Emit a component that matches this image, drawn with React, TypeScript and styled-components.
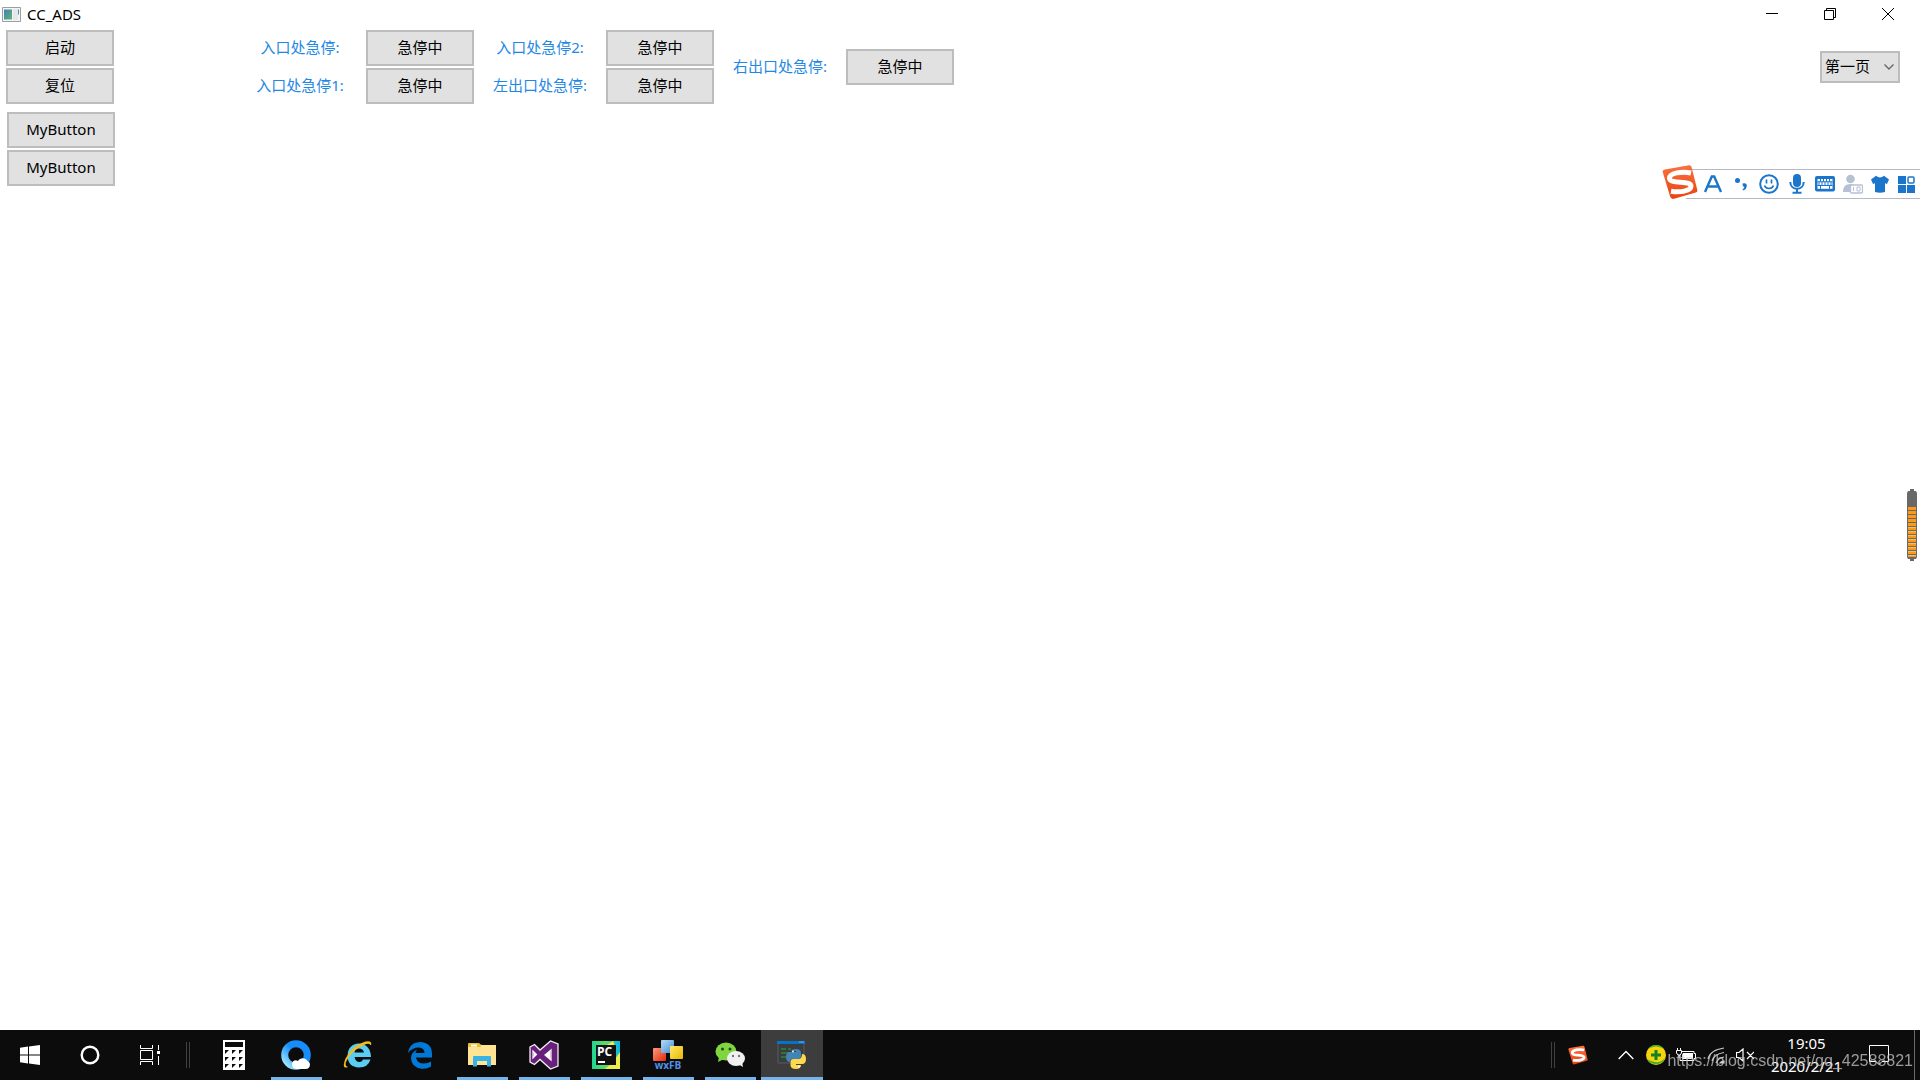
import React from 'react';
import styled, { createGlobalStyle } from 'styled-components';

const GlobalStyle = createGlobalStyle`
  * { box-sizing: border-box; }
  body { margin: 0; background: #fff; }
  button, select { font: inherit; margin: 0; }
`;

const ui = '"Noto Sans", "Noto Sans CJK SC", sans-serif';

const Desktop = styled.div`
  min-height: 100vh;
  display: flex;
  flex-direction: column;
  background: #fff;
  font-family: ${ui};
  font-size: 15px;
  color: #000;
`;

const TitleBar = styled.header`
  display: flex;
  align-items: center;
  height: 28px;
  padding: 0 3px 0 2px;
  gap: 6px;
`;

const Title = styled.h1`
  margin: 0;
  flex: 1;
  font-size: 15px;
  font-weight: 400;
  line-height: 28px;
`;

const CaptionButtons = styled.div`
  display: flex;
`;

const CaptionButton = styled.button`
  width: 58px;
  height: 28px;
  padding: 0;
  border: 0;
  background: transparent;
  display: flex;
  align-items: center;
  justify-content: center;
`;

const Client = styled.main`
  flex: 1;
  display: flex;
  flex-direction: column;
`;

const Toolbar = styled.section`
  display: flex;
  align-items: center;
  height: 78px;
  padding-right: 20px;
`;

const Cells = styled.div`
  display: flex;
  align-items: center;
`;

const Column = styled.div<{ $gapBefore?: boolean }>`
  display: flex;
  flex-direction: column;
  width: 120px;
  align-items: center;
  margin-left: ${(p) => (p.$gapBefore ? 120 : 0)}px;
`;

const Cell = styled.div`
  display: flex;
  align-items: center;
  justify-content: center;
  height: 38px;
`;

const StopLabel = styled.label`
  padding-bottom: 3px;
  color: #1e88e5;
  line-height: 20px;
  white-space: nowrap;
`;

const PushButton = styled.button`
  width: 108px;
  height: 36px;
  padding: 0 0 2px;
  border: 2px solid #bdbdbd;
  background: #e1e1e1;
  color: #000;
  line-height: 20px;
`;

const PageSelectBox = styled.div`
  display: grid;
  margin-left: auto;
  align-items: center;
  & > * { grid-area: 1 / 1; }
  & > svg { justify-self: end; margin-right: 6px; pointer-events: none; }
`;

const PageSelect = styled.select`
  appearance: none;
  width: 80px;
  height: 32px;
  padding: 0 3px 2px;
  border: 2px solid #bdbdbd;
  border-radius: 0;
  background: #e1e1e1;
  color: #000;
`;

const ExtraButtons = styled.section`
  display: flex;
  flex-direction: column;
  padding: 6px 7px;
  gap: 2px;
`;

const ImeBar = styled.aside`
  position: fixed;
  top: 164px;
  right: 0;
  display: flex;
  align-items: center;
  height: 36px;
`;

const ImeLogo = styled.div`
  z-index: 1;
  height: 36px;
  margin-right: -12px;
`;

const ImeTools = styled.div`
  display: flex;
  align-items: center;
  height: 30px;
  margin-top: 4px;
  padding: 0 1px 0 13px;
  border: 1px solid #b5b9c4;
  border-width: 1px 0;
  background: #fff;
`;

const ImeButton = styled.button<{ $narrow?: boolean }>`
  width: ${(p) => (p.$narrow ? 26 : 28)}px;
  height: 28px;
  padding: 0;
  border: 0;
  background: transparent;
  display: flex;
  align-items: center;
  justify-content: center;
`;

const BatteryGauge = styled.aside`
  position: fixed;
  top: 489px;
  right: 3px;
  height: 72px;
`;

const Taskbar = styled.footer`
  display: flex;
  align-items: center;
  height: 50px;
  background: #0c0c0c;
  color: #fff;
`;

const SystemButton = styled.button`
  width: 60px;
  height: 50px;
  padding: 0;
  border: 0;
  background: transparent;
  display: flex;
  align-items: center;
  justify-content: center;
`;

const Divider = styled.div`
  width: 4px;
  height: 26px;
  border: 1px solid #404040;
  border-width: 0 1px;
`;

const SystemDivider = styled(Divider)`
  margin-left: 6px;
`;

const Apps = styled.nav`
  display: flex;
  padding-left: 13px;
  flex: 1;
`;

const AppButton = styled.button<{ $running?: boolean; $active?: boolean }>`
  position: relative;
  width: 62px;
  height: 50px;
  padding: 0;
  border: 0;
  background: ${(p) => (p.$active ? '#3d3d3d' : 'transparent')};
  display: flex;
  align-items: center;
  justify-content: center;
  &::after {
    content: '';
    display: ${(p) => (p.$running ? 'block' : 'none')};
    position: absolute;
    bottom: 0;
    left: ${(p) => (p.$active ? 0 : 6)}px;
    right: ${(p) => (p.$active ? 0 : 5)}px;
    height: 3px;
    background: #76b4ee;
  }
`;

const Tray = styled.div`
  display: flex;
  align-items: center;
  height: 50px;
`;

const TrayButton = styled.button<{ $width: number; $after?: number }>`
  width: ${(p) => p.$width}px;
  height: 50px;
  margin-right: ${(p) => p.$after ?? 0}px;
  padding: 0;
  border: 0;
  background: transparent;
  display: flex;
  align-items: center;
  justify-content: center;
`;

const Clock = styled.time`
  width: 95px;
  font-size: 15px;
  line-height: 23px;
  text-align: center;
`;

const ShowDesktop = styled.button`
  width: 6px;
  height: 50px;
  padding: 0;
  border: 0;
  border-left: 1px solid #6a6a6a;
  background: transparent;
`;

const Watermark = styled.div`
  position: fixed;
  right: 7px;
  bottom: 8px;
  font-family: "Liberation Sans", Arial, sans-serif;
  font-size: 16px;
  line-height: 22px;
  color: rgba(200, 200, 200, 0.75);
  pointer-events: none;
`;

const blue = '#1b75cb';

function SogouLogo({ size }: { size: number }) {
  return (
    <svg width={size} height={size} viewBox="0 0 36 36" display="block">
      <defs>
        <linearGradient id="sogou" x1="0" y1="0" x2="0" y2="1">
          <stop offset="0" stopColor="#f9713f" />
          <stop offset="1" stopColor="#ea4310" />
        </linearGradient>
      </defs>
      <path d="M3 5.500 27 1.200q2-.3 2.500 1.500L35.300 26q.4 2-1.500 2.500L12 34.800q-3 .6-3.800-2L.7 8q-.4-2 2.300-2.500z" fill="url(#sogou)" />
      <path d="M29 9C20 7 7.500 9 7.500 14.200c0 6.300 21.500 1.600 21.500 7.800 0 5-11 6.800-20 5.200" fill="none" stroke="#fff" strokeWidth="5" />
    </svg>
  );
}

const imeIcons: { name: string; narrow?: boolean; art: React.ReactNode }[] = [
  { name: 'English', art: <svg width="18" height="18"><path d="M1 17 7.800 1.500h2.400L17 17M4 11.500h10" fill="none" stroke={blue} strokeWidth="2.400" /></svg> },
  { name: 'Punctuation', art: <svg width="14" height="16"><circle cx="3.500" cy="4.500" r="2.500" fill={blue} /><path d="M8.500 7.500q4.500-1 4.300 2.500-.5 3.500-3.500 4.500l-.8-1.200q2-.8 1.800-2.300-2-.5-1.800-3.500" fill={blue} /></svg> },
  { name: 'Emoji', art: <svg width="20" height="20" fill="none" stroke={blue} strokeWidth="2"><circle cx="10" cy="10" r="8.800" /><path d="M7.500 5.500v4M12.500 5.500v4M5.500 11.500c1.500 4 7.500 4 9 0" strokeWidth="1.700" /></svg> },
  { name: 'Voice', art: <svg width="16" height="20"><rect x="4" y="0" width="8" height="13" rx="4" fill={blue} /><path d="M1.300 8c0 9 13.400 9 13.400 0M8 14v4.500M3.500 18.800h9" fill="none" stroke={blue} strokeWidth="2" /></svg> },
  { name: 'Keyboard', art: <svg width="20" height="16"><rect width="20" height="15.500" rx="2" fill={blue} /><path d="M2.500 3h15v9.800h-15z" fill="#fff" /><path d="M2.500 5.800h15M2.500 9.500h15M5.500 3v2.800M8.500 3v2.800M11.500 3v2.800M14.500 3v2.800M4 5.800v3.700M7 5.800v3.700M10 5.800v3.700M13 5.800v3.700M16 5.800v3.700M5.500 9.500v3.300M14.500 9.500v3.300" stroke={blue} /></svg> },
  { name: 'Account', art: <svg width="20" height="20"><circle cx="7.500" cy="5" r="4.300" fill="#b6c1d5" /><path d="M0 18q0-8 7-8 4 0 5 2v6z" fill="#b6c1d5" /><rect x="7.500" y="11" width="12" height="8" rx="1" fill="#fff" stroke="#b6c1d5" strokeWidth="1.300" /><path d="M10.500 13v4M14 13h3v4h-3z" fill="none" stroke="#b6c1d5" /></svg> },
  { name: 'Skin', narrow: true, art: <svg width="18" height="18"><path d="M5 .8Q9 4 13 .8L18 4.500 16 9l-2-.8V17q-5 1.500-10 0V8.200L2 9 0 4.500z" fill={blue} /></svg> },
  { name: 'Toolbox', narrow: true, art: <svg width="17" height="17" fill={blue}><path d="M0 0h8v8H0zM0 9h8v8H0zM9 9h8v8H9z" /><rect x="10" y="1" width="6" height="6" rx="1" fill="#fff" stroke={blue} strokeWidth="1.500" /></svg> },
];

const apps: { name: string; running?: boolean; active?: boolean; art: React.ReactNode }[] = [
  {
    name: 'Calculator',
    art: (
      <svg width="22" height="30">
        <path d="M0 0h22v30H0z" fill="#fff" />
        <path d="M2 2h18v5H2zM2 10h4L2 14zM9 10h4l-4 4zM16 10h4l-4 4zM2 17h4l-4 4zM9 17h4l-4 4zM16 17h4l-4 4zM2 24h4l-4 4zM9 24h4l-4 4zM16 24h4l-4 4z" fill="#0c0c0c" />
      </svg>
    ),
  },
  {
    name: 'QQ Browser',
    running: true,
    art: (
      <svg width="30" height="30">
        <defs><linearGradient id="qq" x1="1" y1="0" x2="0" y2="1"><stop offset=".45" stopColor="#168dfb" /><stop offset="1" stopColor="#a8edff" /></linearGradient></defs>
        <circle cx="15" cy="15" r="11.300" fill="none" stroke="url(#qq)" strokeWidth="7" />
        <path d="M15 29a4.500 4.500 0 0 1-1-8.700q2 0 3 .7a5.500 5.500 0 0 1 9.500 0A4.200 4.200 0 0 1 25 29z" fill="#fff" />
      </svg>
    ),
  },
  {
    name: 'Internet Explorer',
    art: (
      <svg width="30" height="30">
        <path d="M27.500 19.500Q25 27.500 16 27.500 5 27 4.500 16 5 4 16 3.500 27.500 4.500 28 17H11.500q1 5 5 5 2.500 0 3.500-2.500zM11.500 12.500H21q-1-4-5-4t-4.500 4z" fill="#5bcdf5" />
        <path d="M5 27Q-2 30 2.500 18.500 10 5 22.500 1.500q7-1.500 5.500 4-1.500-3-7-.5Q8 10.500 3 22q-1.500 4.500 2 5z" fill="#f4bd18" />
      </svg>
    ),
  },
  {
    name: 'Edge',
    art: (
      <svg width="26" height="28">
        <path d="M1 12Q2.500 1 14 1q11 1 11 12v3.500H9q1 6 8 6 4 0 7-2v5q-4 2.500-9 2.200Q4 26.500 4 17q0-5.500 6-8.500-1.500 2-1.500 3.500h9q0-5-5.500-5.500Q5 6.500 1 12z" fill="#0078d7" />
      </svg>
    ),
  },
  {
    name: 'File Explorer',
    running: true,
    art: (
      <svg width="28" height="24">
        <path d="M0 1h11l3 1H28v20H0z" fill="#ffe493" /><path d="M0 1q0-1 1-1h10q1 0 2 4H0z" fill="#f2bd2d" /><path d="M3 1.500h6v2H3z" fill="#fff" />
        <path d="M5 23.500V14q0-1 1-1h16q1 0 1 1v9.500h-4V18H9v5.500z" fill="#39b2e5" />
      </svg>
    ),
  },
  {
    name: 'Visual Studio',
    running: true,
    art: (
      <svg width="30" height="30">
        <path d="M1 7 5.500 4.500 11 10 21.500 1 29 4v22l-7.500 3L11 19.500 5.500 24.500 1 22zM4 11v7l3.500-3.500zM22 10l-6 5 6 5z" fill="#68217a" fillRule="evenodd" stroke="#f3edf5" strokeWidth="1.300" />
        <path d="m4.500 11.500 3 3-3 3zM21.500 10.500v9L16 15z" fill="#fff" />
      </svg>
    ),
  },
  {
    name: 'PyCharm',
    running: true,
    art: (
      <svg width="28" height="28">
        <defs><linearGradient id="pc"><stop stopColor="#1ed791" /><stop offset=".5" stopColor="#61da62" /><stop offset="1" stopColor="#05b6ed" /></linearGradient></defs>
        <path d="M0 0h28v28H0z" fill="url(#pc)" /><path d="m13 28 7-6 8-11v17zM15 4l6-4 2 5z" fill="#ecf04c" />
        <path d="M4 4h20v20H4z" fill="#111" />
        <text x="5" y="15" fill="#fff" fontFamily="Open Sans, sans-serif" fontWeight="700" fontSize="12">PC</text>
        <path d="M6 20h7v2H6z" fill="#fff" />
      </svg>
    ),
  },
  {
    name: 'wxFormBuilder',
    running: true,
    art: (
      <svg width="32" height="34" viewBox="0 -2 32 34">
        <defs>
          <linearGradient id="wr" x2="1" y2="1"><stop stopColor="#ff9a7e" /><stop offset="1" stopColor="#e02a08" /></linearGradient>
          <linearGradient id="wb" x2="1" y2="1"><stop stopColor="#b5dcfa" /><stop offset="1" stopColor="#478bd0" /></linearGradient>
          <linearGradient id="wy" x2="1" y2="1"><stop stopColor="#ffe96a" /><stop offset="1" stopColor="#e9b800" /></linearGradient>
        </defs>
        <rect x="1" y="8" width="13" height="13" rx="1" fill="url(#wr)" /><rect x="9" y="0" width="13" height="13" rx="1" fill="url(#wb)" /><rect x="18" y="6" width="13" height="13" rx="1" fill="url(#wy)" />
        <text x="16" y="29" textAnchor="middle" fill="#5591ea" fontFamily="Open Sans, sans-serif" fontWeight="700" fontSize="10">wxFB</text>
      </svg>
    ),
  },
  {
    name: 'WeChat',
    running: true,
    art: (
      <svg width="30" height="26">
        <ellipse cx="11" cy="9.500" rx="10.500" ry="9" fill="#80d640" /><path d="m4 15-1 5 6-3z" fill="#80d640" />
        <ellipse cx="21" cy="16.500" rx="9" ry="7.500" fill="#f1f1f3" /><path d="m23 22 5 3-1-5z" fill="#f1f1f3" />
        <g fill="#264918"><circle cx="7.500" cy="7" r="1.500" /><circle cx="15" cy="7" r="1.500" /><circle cx="18" cy="14" r="1.200" fill="#777" /><circle cx="24" cy="14" r="1.200" fill="#777" /></g>
      </svg>
    ),
  },
  {
    name: 'Python',
    running: true,
    active: true,
    art: (
      <svg width="30" height="30">
        <path d="M1 2h26v21H1z" fill="#393d40" stroke="#555c60" /><path d="M0 1h28v3H0z" fill="#0872c6" /><path d="M22 2h5" stroke="#64b4e8" />
        <path d="M4 9h5M4 13h8M4 17h6M11 9h3" stroke="#2f8738" strokeWidth="1.300" />
        <path d="M14 11q1-2 5-2 5 0 5 4v3q0 3-3 3h-5q-3 0-3 3-4 0-4-5t4-5h6v-1z" fill="#4384b7" />
        <path d="M25 14q4 0 4 5t-4 5h-6v1h5q0 4-5 4-5.500 0-5.500-4v-3q0-3 3-3h5q3.500 0 3.500-5z" fill="#ffd94d" />
        <circle cx="16" cy="11.500" r=".9" fill="#fff" /><circle cx="22" cy="26.500" r=".9" fill="#fff" />
      </svg>
    ),
  },
];

const stops = [
  [{ id: 'in', label: '入口处急停:' }, { id: 'in1', label: '入口处急停1:' }],
  [{ id: 'in2', label: '入口处急停2:' }, { id: 'left', label: '左出口处急停:' }],
  [{ id: 'right', label: '右出口处急停:' }],
];

export default function App() {
  return (
    <Desktop>
      <GlobalStyle />
      <TitleBar>
        <svg width="19" height="15">
          <defs><linearGradient id="win" x2="1" y2="1"><stop stopColor="#477fae" /><stop offset="1" stopColor="#5cb57f" /></linearGradient></defs>
          <path d="M.5.5h18v14H.5z" fill="#f4f4f4" stroke="#9a9fa5" /><path d="M2 2.500h8v10H2z" fill="url(#win)" /><path d="M11 2h5v11h-5z" fill="#e6e7e8" /><path d="M16 2.500h1v5h-1z" fill="#4c92a0" />
        </svg>
        <Title>CC_ADS</Title>
        <CaptionButtons>
          <CaptionButton aria-label="Minimize"><svg width="12" height="12"><path d="M0 5.500h12" stroke="#000" /></svg></CaptionButton>
          <CaptionButton aria-label="Restore"><svg width="12" height="12" fill="none" stroke="#000"><path d="M.5 2.500h9v9h-9zM2.500 2.500v-2h9v9h-2" /></svg></CaptionButton>
          <CaptionButton aria-label="Close"><svg width="12" height="12"><path d="m0 0 12 12M12 0 0 12" stroke="#000" /></svg></CaptionButton>
        </CaptionButtons>
      </TitleBar>
      <Client>
        <Toolbar>
          <Cells>
            <Column>
              <Cell><PushButton>启动</PushButton></Cell>
              <Cell><PushButton>复位</PushButton></Cell>
            </Column>
            {stops.map((group, i) => (
              <React.Fragment key={i}>
                <Column $gapBefore={i === 0}>
                  {group.map((s) => <Cell key={s.id}><StopLabel htmlFor={s.id}>{s.label}</StopLabel></Cell>)}
                </Column>
                <Column>
                  {group.map((s) => <Cell key={s.id}><PushButton id={s.id}>急停中</PushButton></Cell>)}
                </Column>
              </React.Fragment>
            ))}
          </Cells>
          <PageSelectBox>
            <PageSelect aria-label="页"><option>第一页</option></PageSelect>
            <svg width="10" height="6"><path d="m.5.500 4.500 4.500L9.500.5" fill="none" stroke="#666" strokeWidth="1.400" /></svg>
          </PageSelectBox>
        </Toolbar>
        <ExtraButtons>
          <PushButton>MyButton</PushButton>
          <PushButton>MyButton</PushButton>
        </ExtraButtons>
      </Client>
      <ImeBar>
        <ImeLogo><SogouLogo size={36} /></ImeLogo>
        <ImeTools>
          {imeIcons.map((i) => <ImeButton key={i.name} aria-label={i.name} $narrow={i.narrow}>{i.art}</ImeButton>)}
        </ImeTools>
      </ImeBar>
      <BatteryGauge>
        <svg width="10" height="72">
          <path d="M3 0h4v2h2l1 2v64l-1 2H7v2H3v-2H1l-1-2V4l1-2h2z" fill="#696969" />
          <path d="M5 18v50" stroke="#fb9a18" strokeWidth="8" strokeDasharray="3 1" />
          <path d="M5 38v30" stroke="#ffbd55" strokeWidth="8" strokeDasharray="1 3" />
        </svg>
      </BatteryGauge>
      <Taskbar>
        <SystemButton aria-label="Start"><svg width="20" height="20" fill="#fff"><path d="M0 2.700 8 1.500V9.500H0zM9 1.400 20 0v9.500H9zM0 10.500h8v8L0 17.300zM9 10.500h11V20L9 18.600z" /></svg></SystemButton>
        <SystemButton aria-label="Cortana"><svg width="20" height="20"><circle cx="10" cy="10" r="8.300" fill="none" stroke="#fff" strokeWidth="2.400" /></svg></SystemButton>
        <SystemButton aria-label="Task view"><svg width="20" height="20" fill="none" stroke="#fff"><path d="M.5 5.500h12v9H.5zM.5 0v3.500h12V0M.5 20v-3.500h12V20M18.500 0v5M18.500 11v9" /><path d="M17 6h3v3h-3z" fill="#fff" stroke="none" /></svg></SystemButton>
        <SystemDivider />
        <Apps>
          {apps.map((a) => <AppButton key={a.name} aria-label={a.name} $running={a.running} $active={a.active}>{a.art}</AppButton>)}
        </Apps>
        <Tray>
          <Divider />
          <TrayButton $width={46} $after={10} aria-label="Sogou"><SogouLogo size={20} /></TrayButton>
          <TrayButton $width={30} aria-label="Show hidden icons"><svg width="16" height="10"><path d="m.7 9 7.300-7.500L15.300 9" fill="none" stroke="#fff" strokeWidth="1.400" /></svg></TrayButton>
          <TrayButton $width={30} aria-label="Security"><svg width="20" height="20"><circle cx="10" cy="10" r="10" fill="#f6d50a" /><path d="M2 4a10 10 0 0 1 16 0Q10-1 2 4M1 14a10 10 0 0 0 18-1Q12 21 1 14" fill="#4caf2e" /><path d="M10 5v10M5 10h10" stroke="#148128" strokeWidth="3" /></svg></TrayButton>
          <TrayButton $width={30} aria-label="Battery"><svg width="20" height="14"><path d="M4 3.500h14v2h1.500v5H18v2H4z" fill="none" stroke="#fff" /><path d="M7 5h10v6H6V7z" fill="#fff" /><path d="M1.500 0v2M4.500 0v2M.5 2.500h5V5L4 7H2L.5 5zM3 7v3" fill="#0c0c0c" stroke="#fff" /></svg></TrayButton>
          <TrayButton $width={30} aria-label="Network"><svg width="18" height="18" fill="none" stroke="#c8c8c8" strokeWidth="1.200"><path d="M1 13Q3 4 17 2M5 15Q7 8 17 6.500M9 17q2-5 8-6" /><path d="M13 17q1-2 4-2v2z" fill="#fff" /></svg></TrayButton>
          <TrayButton $width={28} aria-label="Volume"><svg width="18" height="14" fill="none" stroke="#fff" strokeWidth="1.200"><path d="M.5 4.500H3L7 1v12L3 9.500H.5zM11 4l7 7M18 4l-7 7" /></svg></TrayButton>
          <Clock dateTime="2020-02-21T19:05">19:05<br />2020/2/21</Clock>
          <TrayButton $width={50} $after={10} aria-label="Notifications"><svg width="20" height="20"><path d="M.5.500h19v16H13l-3 3-3-3H.5z" fill="none" stroke="#fff" /></svg></TrayButton>
          <ShowDesktop aria-label="Show desktop" />
        </Tray>
      </Taskbar>
      <Watermark>https://blog.csdn.net/qq_42588821</Watermark>
    </Desktop>
  );
}
